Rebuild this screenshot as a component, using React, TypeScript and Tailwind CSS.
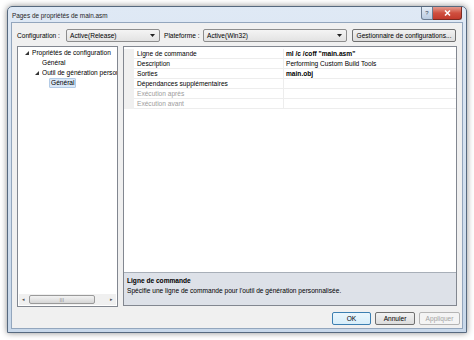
import React from "react";

const font = { fontFamily: '"Liberation Sans", Arial, sans-serif' };

const Combo = ({ value, className = "" }: { value: string; className?: string }) => (
  <div
    className={`h-[13px] flex items-center justify-between border border-[#8d8d8d] rounded-[2px] bg-gradient-to-b from-[#f4f4f4] to-[#e3e3e3] pl-[3px] pr-[4px] ${className}`}
  >
    <span>{value}</span>
    <svg width="5" height="3" viewBox="0 0 5 3">
      <path d="M0 0h5L2.5 3z" fill="#222" />
    </svg>
  </div>
);

const Btn = ({
  label,
  kind = "normal",
  className = "",
}: {
  label: string;
  kind?: "normal" | "default" | "disabled";
  className?: string;
}) => {
  const styles =
    kind === "default"
      ? "border-[#3c7fb1] from-[#eaf6fd] to-[#d7eefa] text-black"
      : kind === "disabled"
        ? "border-[#b5b5b5] from-[#f4f4f4] to-[#f4f4f4] text-[#a3a3a3]"
        : "border-[#707070] from-[#f2f2f2] to-[#dcdcdc] text-black";
  return (
    <div
      className={`h-[13px] flex items-center justify-center border rounded-[2px] bg-gradient-to-b ${styles} ${className}`}
    >
      {label}
    </div>
  );
};

const Arrow = () => (
  <svg width="4" height="4" viewBox="0 0 4 4" className="shrink-0">
    <path d="M4 0v4H0z" fill="#333" />
  </svg>
);

const rows: { name: string; value: string; bold?: boolean; dim?: boolean }[] = [
  { name: "Ligne de commande", value: 'ml /c /coff "main.asm"', bold: true },
  { name: "Description", value: "Performing Custom Build Tools" },
  { name: "Sorties", value: "main.obj", bold: true },
  { name: "Dépendances supplémentaires", value: "" },
  { name: "Exécution après", value: "", dim: true },
  { name: "Exécution avant", value: "", dim: true },
];

export default function App() {
  return (
    <div className="w-[474px] h-[340px] bg-white pt-[6px] pl-[7px] overflow-hidden text-[6.6px] text-black" style={font}>
      <div className="w-[460px] h-[327px] flex flex-col border border-[#56697f] rounded-t-[5px] bg-gradient-to-b from-[#dfe9f5] to-[#c8d8ea] shadow-[0_0_6px_rgba(0,0,0,0.45)] px-[3px] pb-[3px]">
        {/* title bar */}
        <div className="h-[15px] flex items-start">
          <span className="mt-[4px] ml-[1px] text-[6.4px] text-[#1e1e1e]">Pages de propriétés de main.asm</span>
          <div className="ml-auto flex mr-[1px]">
            <div className="w-[12px] h-[13px] flex items-center justify-center border border-[#6b7c90] border-t-0 rounded-bl-[3px] bg-gradient-to-b from-[#e6eef7] to-[#b9cbe0] text-[6px] text-[#3b4a5c]">
              ?
            </div>
            <div className="w-[29px] h-[13px] flex items-center justify-center border border-[#7a2a22] border-t-0 border-l-0 rounded-br-[3px] bg-gradient-to-b from-[#e39a8e] via-[#cf4f3f] to-[#c23a2c]">
              <svg width="7" height="6" viewBox="0 0 7 6">
                <path d="M1 0.5l5 5M6 0.5l-5 5" stroke="white" strokeWidth="1.5" />
              </svg>
            </div>
          </div>
        </div>
        {/* client */}
        <div className="flex-1 flex flex-col bg-[#f0f0f0] border border-[#93a6bd]">
          <div className="mt-[6px] flex items-center h-[13px]">
            <span className="ml-[5px] w-[49px]">Configuration :</span>
            <Combo value="Active(Release)" className="w-[94px]" />
            <span className="ml-[4px] w-[39px]">Plateforme :</span>
            <Combo value="Active(Win32)" className="w-[144px]" />
            <Btn label="Gestionnaire de configurations..." className="ml-[5px] w-[104px]" />
          </div>
          <div className="mt-[4px] flex h-[261px]">
            {/* tree */}
            <div className="ml-[5px] w-[101px] h-[261px] flex flex-col border border-[#828790] bg-white">
              <div className="flex-1 pt-[1px] overflow-hidden whitespace-nowrap">
                <div className="h-[10px] flex items-center pl-[7px] gap-[3px]">
                  <Arrow />
                  <span>Propriétés de configuration</span>
                </div>
                <div className="h-[10px] flex items-center pl-[24px]">Général</div>
                <div className="h-[10px] flex items-center pl-[17px] gap-[3px]">
                  <Arrow />
                  <span className="min-w-0 overflow-hidden">Outil de génération personnalisée</span>
                </div>
                <div className="h-[10px] flex items-center pl-[31px]">
                  <span className="h-[10px] flex items-center px-[1px] bg-[#d9e8f8] border border-[#b3cbe6] rounded-[1px]">
                    Général
                  </span>
                </div>
              </div>
              <div className="h-[11px] mb-[1px] mx-[1px] flex items-center bg-[#f0f0f0]">
                <span className="w-[9px] text-center text-[5px] text-[#555]">◂</span>
                <div className="w-[66px] h-[9px] ml-[1px] flex items-center justify-center border border-[#9a9a9a] rounded-[2px] bg-gradient-to-b from-[#f3f3f3] to-[#d6d6d6]">
                  <span className="text-[4px] text-[#666] tracking-[0.5px]">|||</span>
                </div>
                <span className="ml-auto w-[9px] text-center text-[5px] text-[#555]">▸</span>
              </div>
            </div>
            {/* property grid */}
            <div className="ml-[5px] w-[334px] h-[260px] flex flex-col border border-[#828790] bg-white">
              <div className="flex-1 pt-[2px]">
                {rows.map((r) => (
                  <div key={r.name} className="h-[10px] flex">
                    <div className="w-[10px] bg-[#f0f0f0]" />
                    <div
                      className={`w-[149px] flex items-center pl-[3px] border-b border-[#ededed] ${r.dim ? "text-[#9c9c9c]" : ""}`}
                    >
                      {r.name}
                    </div>
                    <div
                      className={`flex-1 flex items-center pl-[2px] border-b border-l border-[#ededed] ${r.bold ? "font-bold" : ""}`}
                    >
                      {r.value}
                    </div>
                  </div>
                ))}
              </div>
              <div className="h-[33px] bg-[#dde1e8] border-t border-[#a8afb8] px-[3px] pt-[3px]">
                <div className="h-[10px] flex items-center font-bold">Ligne de commande</div>
                <div className="h-[10px] flex items-center">
                  Spécifie une ligne de commande pour l'outil de génération personnalisée.
                </div>
              </div>
            </div>
          </div>
          <div className="mt-[5px] flex justify-end pr-[2px] gap-[4px]">
            <Btn label="OK" kind="default" className="w-[39px]" />
            <Btn label="Annuler" className="w-[40px]" />
            <Btn label="Appliquer" kind="disabled" className="w-[41px]" />
          </div>
        </div>
      </div>
    </div>
  );
}
